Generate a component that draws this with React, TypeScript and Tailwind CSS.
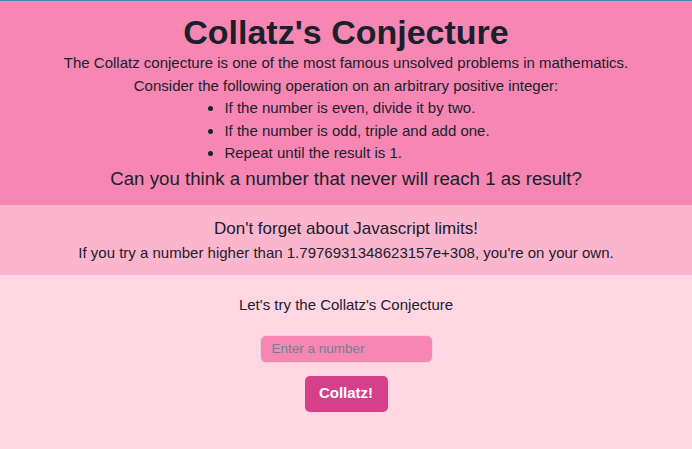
export default function App() {
  return (
    <div
      className="min-h-screen flex flex-col bg-[#fed7e2] text-[#1a202c] border-t border-[#4a80c0]"
      style={{ fontFamily: '"Liberation Sans", Arial, sans-serif' }}
    >
      <section className="bg-[#f687b3] text-center pt-[13px] pb-[12px]">
        <h1 className="text-[34px] leading-[37px] font-bold">Collatz's Conjecture</h1>
        <p className="text-[15px] leading-[23px]">
          The Collatz conjecture is one of the most famous unsolved problems in mathematics.
        </p>
        <p className="text-[15px] leading-[23px]">
          Consider the following operation on an arbitrary positive integer:
        </p>
        <ul className="w-fit mx-auto text-left list-disc pl-[22px] text-[15px] leading-[22.5px]">
          <li>If the number is even, divide it by two.</li>
          <li>If the number is odd, triple and add one.</li>
          <li>Repeat until the result is 1.</li>
        </ul>
        <p className="text-[18.7px] leading-[28px]">
          Can you think a number that never will reach 1 as result?
        </p>
      </section>
      <section className="bg-[#fbb6ce] text-center pt-[12px] pb-[10px]">
        <p className="text-[17px] leading-[24px]">Don't forget about Javascript limits!</p>
        <p className="text-[15px] leading-[24px]">
          If you try a number higher than 1.7976931348623157e+308, you're on your own.
        </p>
      </section>
      <section className="flex flex-col items-center pt-[19px]">
        <p className="text-[15px] leading-[22px]">Let's try the Collatz's Conjecture</p>
        <input
          type="text"
          placeholder="Enter a number"
          className="mt-[19px] w-[173px] h-[28px] rounded-[6px] bg-[#f687b3] border border-[#e5d3e3] px-[11px] text-[13.5px] placeholder:text-[#718096] outline-none"
        />
        <button className="mt-[13px] w-[83px] h-[36px] rounded-[5px] bg-[#d53f8c] text-white font-bold text-[15px]">
          Collatz!
        </button>
      </section>
    </div>
  );
}
